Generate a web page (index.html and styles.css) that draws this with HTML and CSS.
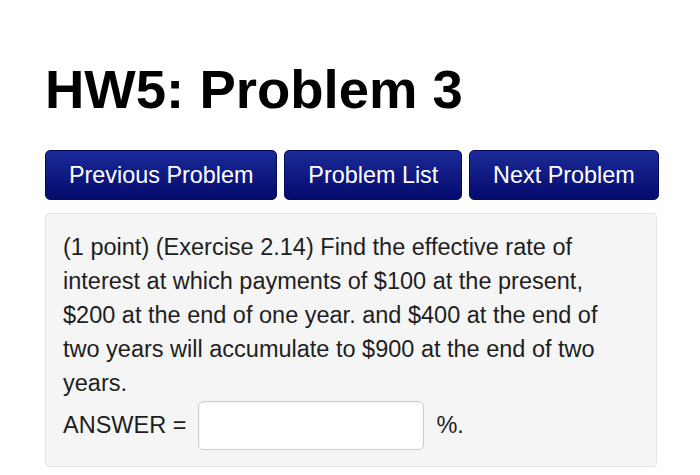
FILE: index.html
```html
<!DOCTYPE html>
<html lang="en">
<head>
  <meta charset="UTF-8">
  <meta name="viewport" content="width=device-width, initial-scale=1.0">
  <title>HW5: Problem 3</title>
  <link rel="stylesheet" href="styles.css">
</head>
<body>
  <div class="page">
    <h1 class="title">HW5: Problem 3</h1>

    <!-- problem navigation -->
    <div class="nav">
      <a class="nav-btn" href="#">Previous Problem</a>
      <a class="nav-btn" href="#">Problem List</a>
      <a class="nav-btn" href="#">Next Problem</a>
    </div>

    <div class="problem">
      <p class="problem-text">(1 point) (Exercise 2.14) Find the effective rate of interest at which payments of $100 at the present, $200 at the end of one year. and $400 at the end of two years will accumulate to $900 at the end of two years.</p>
      <div class="answer">
        <span>ANSWER =</span>
        <input class="answer-input" type="text">
        <span>%.</span>
      </div>
    </div>
  </div>
</body>
</html>
```

FILE: styles.css
```css
/* general */
body {
  margin: 0;
  background: #fff;
  color: #1e1e1e;
  font-family: "Liberation Sans", Arial, sans-serif;
}

.page {
  padding: 60px 43px 0 45px;
}

.title {
  margin: 0 0 30px;
  font-size: 54.5px;
  line-height: 60px;
  font-weight: bold;
  color: #000;
}

/* navigation buttons */
.nav {
  display: flex;
  gap: 7px;
  margin-bottom: 13px;
}

.nav-btn {
  display: block;
  flex: none;
  white-space: nowrap;
  padding: 10px 22.9px;
  font-size: 23.4px;
  line-height: 28px;
  color: #fff;
  text-decoration: none;
  background: linear-gradient(to bottom, #1b2b98, #030a6c);
  border: 1px solid #050a5c;
  border-radius: 5px;
}

/* problem panel */
.problem {
  background: #f5f5f5;
  border: 1px solid #e2e2e2;
  border-radius: 4px;
  padding: 16px 17px 16px 17px;
}

.problem-text {
  margin: 0;
  font-size: 23.5px;
  line-height: 34px;
}

.answer {
  display: flex;
  align-items: center;
  gap: 12px;
  margin-top: 1px;
  font-size: 23.5px;
}

.answer-input {
  width: 226px;
  height: 49px;
  box-sizing: border-box;
  margin: 0;
  border: 1px solid #cfcfcf;
  border-radius: 5px;
  background: #fff;
  box-shadow: inset 0 1px 2px rgba(0, 0, 0, 0.08);
}
```
